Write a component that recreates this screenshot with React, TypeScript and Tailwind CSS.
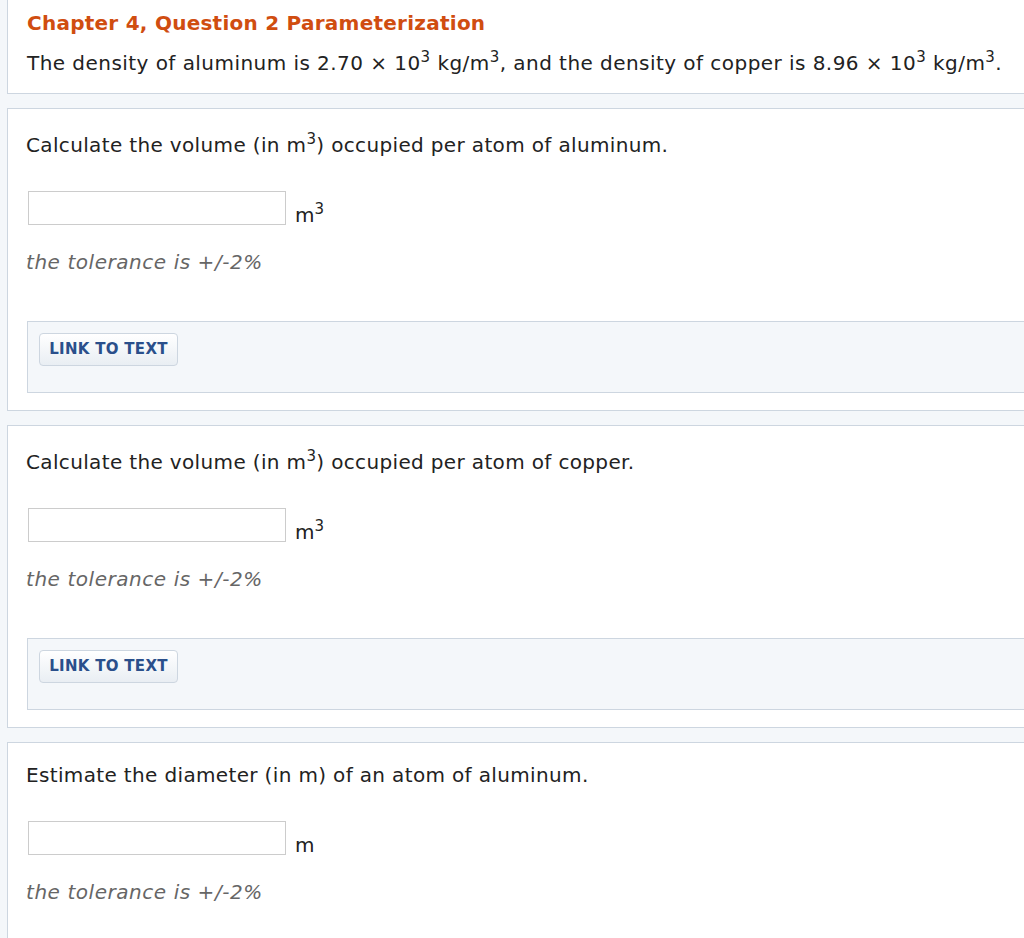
import React from "react";

const font = { fontFamily: '"DejaVu Sans", Verdana, sans-serif' };

function Sup({ children }: { children: React.ReactNode }) {
  return <span className="relative top-[-8px] align-baseline text-[15px] leading-none">{children}</span>;
}

function LinkPanel() {
  return (
    <div className="mt-[47px] ml-[19px] border border-r-0 border-[#cdd6e0] bg-[#f4f7fa] pt-[11px] pb-[26px] pl-[11px]">
      <button className="h-[33px] w-[139px] rounded-[4px] border border-[#cdd6e0] bg-gradient-to-b from-white to-[#e9eef3] text-[15px] font-bold tracking-[0.3px] text-[#2a4f8b]">
        LINK TO TEXT
      </button>
    </div>
  );
}

function Question({
  text,
  unit,
  link,
  compact = false,
}: {
  text: React.ReactNode;
  unit: React.ReactNode;
  link: boolean;
  compact?: boolean;
}) {
  return (
    <div className={`border border-r-0 border-[#cdd6e0] bg-white ${link ? "pb-[17px]" : "pb-[60px]"}`}>
      <div
        className={`${compact ? "pt-[20px]" : "pt-[24px]"} pl-[18px] text-[20px] leading-[24px] tracking-[0.35px] text-[#222]`}
      >
        {text}
      </div>
      <div className="mt-[34px] ml-[20px] flex items-end">
        <div className="h-[34px] w-[258px] border border-[#cccccc] bg-white" />
        <div className="ml-[9px] mb-[-2px] text-[20px] leading-[24px] text-[#222]">{unit}</div>
      </div>
      <div className="mt-[25px] pl-[18px] text-[20px] leading-[24px] tracking-[0.55px] italic text-[#666]">
        the tolerance is +/-2%
      </div>
      {link && <LinkPanel />}
    </div>
  );
}

export default function App() {
  return (
    <div style={font} className="min-h-[938px] w-[1024px] overflow-hidden bg-[#f4f7fa] pl-[7px]">
      <div className="flex flex-col gap-[14px]">
        <div className="border-l border-b border-[#cdd6e0] bg-white pl-[19px] pt-[10px] pb-[18px]">
          <div className="text-[20px] font-bold leading-[26px] tracking-[0.25px] text-[#d04d10]">
            Chapter 4, Question 2 Parameterization
          </div>
          <div className="mt-[15px] whitespace-nowrap text-[20px] leading-[24px] tracking-[0.45px] text-[#222]">
            The density of aluminum is 2.70 × 10<Sup>3</Sup> kg/m<Sup>3</Sup>, and the density of copper is 8.96 × 10
            <Sup>3</Sup> kg/m<Sup>3</Sup>.
          </div>
        </div>
        <Question
          text={
            <>
              Calculate the volume (in m<Sup>3</Sup>) occupied per atom of aluminum.
            </>
          }
          unit={
            <>
              m<Sup>3</Sup>
            </>
          }
          link
        />
        <Question
          text={
            <>
              Calculate the volume (in m<Sup>3</Sup>) occupied per atom of copper.
            </>
          }
          unit={
            <>
              m<Sup>3</Sup>
            </>
          }
          link
        />
        <Question text={<>Estimate the diameter (in m) of an atom of aluminum.</>} unit={<>m</>} link={false} compact />
      </div>
    </div>
  );
}
